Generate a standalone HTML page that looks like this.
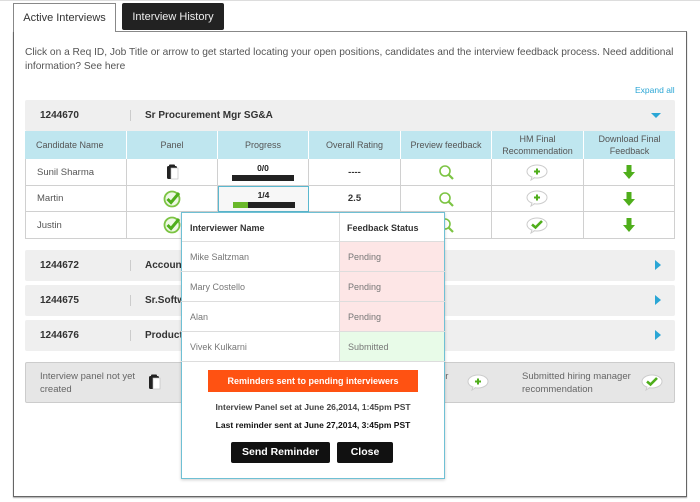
<!DOCTYPE html>
<html><head><style>
*{margin:0;padding:0;box-sizing:border-box}
body{width:700px;height:502px;background:#fff;font-family:"Liberation Sans",sans-serif;position:relative;overflow:hidden;color:#555}
.a{position:absolute}
.tab{position:absolute;font-size:11px;text-align:center;line-height:26px}
.cell{position:absolute;border-right:1px solid #d0d0d0;border-bottom:1px solid #d0d0d0;display:flex;align-items:center;justify-content:center;font-size:9.5px;color:#555}
.hd{background:#bfe6ef;border-right:1px solid #fff;border-bottom:none;text-align:center;line-height:12px;color:#555;font-size:9px}
.sec{position:absolute;left:25px;width:650px;height:31px;background:#efefef;border-radius:2px;font-size:10px;font-weight:bold;color:#333}
.sec .id{position:absolute;left:15px;top:10px}
.sec .sep{position:absolute;left:105px;top:10px;width:1px;height:11px;background:#ccc}
.sec .t{position:absolute;left:120px;top:10px}
.tri{position:absolute;right:14px;top:10px;width:0;height:0;border-top:5px solid transparent;border-bottom:5px solid transparent;border-left:6px solid #2aa6d5}
.pr{position:absolute;left:181px;width:264px;height:30px;border-bottom:1px solid #ddd;font-size:9px;color:#777}
.pr span{position:absolute;left:9px;top:10px}
.pr b{position:absolute;left:158px;top:0;width:105px;height:29px;font-weight:normal;padding:10px 0 0 8px}
</style></head><body>
<div class="a" style="left:0;top:0;width:700px;height:1px;background:#ddd"></div>
<div class="a" style="left:13px;top:31px;width:674px;height:466px;border:1px solid #666;border-top:1px solid #888;box-shadow:0 1px 1px #aaa"></div>
<div class="tab" style="left:13px;top:3px;width:103px;height:29px;border:1px solid #888;border-bottom:none;background:#fff;color:#333;line-height:28px">Active Interviews</div>
<div class="tab" style="left:122px;top:3px;width:102px;height:27px;background:#222;color:#eee;border-radius:2px;line-height:28px">Interview History</div>
<div class="a" style="left:25px;top:46px;font-size:10.2px;line-height:14px;color:#555;width:655px">Click on a Req ID, Job Title or arrow to get started locating your open positions, candidates and the interview feedback process. Need additional information? See here</div>
<div class="a" style="left:635px;top:85px;font-size:8.5px;color:#2aa6d5">Expand all</div>

<div class="sec" style="top:100px;height:31px"><span class="id">1244670</span><span class="sep"></span><span class="t">Sr Procurement Mgr SG&amp;A</span>
<div style="position:absolute;right:14px;top:13px;border-left:5px solid transparent;border-right:5px solid transparent;border-top:5px solid #2aa6d5"></div></div>

<div class="cell hd" style="left:25px;top:131px;width:102px;height:28px;justify-content:flex-start;padding-left:11px">Candidate Name</div>
<div class="cell hd" style="left:127px;top:131px;width:91px;height:28px">Panel</div>
<div class="cell hd" style="left:218px;top:131px;width:91px;height:28px">Progress</div>
<div class="cell hd" style="left:309px;top:131px;width:92px;height:28px">Overall Rating</div>
<div class="cell hd" style="left:401px;top:131px;width:91px;height:28px">Preview feedback</div>
<div class="cell hd" style="left:492px;top:131px;width:92px;height:28px">HM Final<br>Recommendation</div>
<div class="cell hd" style="left:584px;top:131px;width:91px;height:28px;border-right:none">Download Final<br>Feedback</div>

<svg width="0" height="0" style="position:absolute"><defs>
<g id="chk"><circle cx="9" cy="9" r="7.5" fill="#eef8e4" stroke="#7cc443" stroke-width="1.8"/><path d="M4.5 9 L8 12.5 L16 3" fill="none" stroke="#4fae1b" stroke-width="3"/></g>
<g id="mag"><circle cx="7" cy="7" r="5" fill="none" stroke="#7cc443" stroke-width="1.6"/><path d="M10.5 10.5 L15 15" stroke="#7cc443" stroke-width="2.2"/></g>
<g id="bub"><ellipse cx="11" cy="7.5" rx="10" ry="6.5" fill="#fff" stroke="#ccc"/><path d="M6 13 L5 16 L9 13.5" fill="#fff" stroke="#ccc"/><path d="M11 4.5 V10.5 M8 7.5 H14" stroke="#4fae1b" stroke-width="2"/></g>
<g id="bubc"><ellipse cx="11" cy="7.5" rx="10" ry="6.5" fill="#fff" stroke="#ccc"/><path d="M6 13 L5 16 L9 13.5" fill="#fff" stroke="#ccc"/><path d="M6 7.5 L9.5 10.5 L16 4" fill="none" stroke="#4fae1b" stroke-width="2.6"/></g>
<g id="dl"><path d="M3.5 0 H8.5 V7 H12 L6 14 L0 7 H3.5 Z" fill="#4fae1b"/></g>
<g id="clip"><rect x="1" y="2" width="10" height="13" rx="1.5" fill="#222"/><rect x="5" y="4" width="7" height="11" fill="#fff" stroke="#bbb" stroke-width=".6"/><rect x="3" y="0.5" width="6" height="3" rx="1" fill="#222"/></g>
</defs></svg>

<div class="cell" style="left:25px;top:159px;width:102px;height:27px;justify-content:flex-start;padding-left:11px;border-left:1px solid #d0d0d0">Sunil Sharma</div>
<div class="cell" style="left:127px;top:159px;width:91px;height:27px"><svg width="13" height="16"><use href="#clip"/></svg></div>
<div class="cell" style="left:218px;top:159px;width:91px;height:27px;flex-direction:column"><b style="font-size:8.5px;color:#222">0/0</b><div style="width:62px;height:6px;background:#222;margin-top:2px"></div></div>
<div class="cell" style="left:309px;top:159px;width:92px;height:27px;font-weight:bold;color:#333">----</div>
<div class="cell" style="left:401px;top:159px;width:91px;height:27px"><svg width="16" height="16"><use href="#mag"/></svg></div>
<div class="cell" style="left:492px;top:159px;width:92px;height:27px"><svg width="23" height="17"><use href="#bub"/></svg></div>
<div class="cell" style="left:584px;top:159px;width:91px;height:27px;border-right:1px solid #d0d0d0"><svg width="12" height="14"><use href="#dl"/></svg></div>

<div class="cell" style="left:25px;top:186px;width:102px;height:26px;justify-content:flex-start;padding-left:11px;border-left:1px solid #d0d0d0">Martin</div>
<div class="cell" style="left:127px;top:186px;width:91px;height:26px"><svg width="18" height="18"><use href="#chk"/></svg></div>
<div class="cell" style="left:218px;top:186px;width:91px;height:26px;flex-direction:column;border:1px solid #5bb8cf;background:#f7f7f7"><b style="font-size:8.5px;color:#222">1/4</b><div style="width:62px;height:6px;background:#222;margin-top:2px;position:relative"><div style="width:15px;height:6px;background:#6ab82a"></div></div></div>
<div class="cell" style="left:309px;top:186px;width:92px;height:26px;font-weight:bold;color:#333">2.5</div>
<div class="cell" style="left:401px;top:186px;width:91px;height:26px"><svg width="16" height="16"><use href="#mag"/></svg></div>
<div class="cell" style="left:492px;top:186px;width:92px;height:26px"><svg width="23" height="17"><use href="#bub"/></svg></div>
<div class="cell" style="left:584px;top:186px;width:91px;height:26px;border-right:1px solid #d0d0d0"><svg width="12" height="14"><use href="#dl"/></svg></div>

<div class="cell" style="left:25px;top:212px;width:102px;height:27px;justify-content:flex-start;padding-left:11px;border-left:1px solid #d0d0d0">Justin</div>
<div class="cell" style="left:127px;top:212px;width:91px;height:27px"><svg width="18" height="18"><use href="#chk"/></svg></div>
<div class="cell" style="left:218px;top:212px;width:91px;height:27px"></div>
<div class="cell" style="left:309px;top:212px;width:92px;height:27px"></div>
<div class="cell" style="left:401px;top:212px;width:91px;height:27px"><svg width="16" height="16"><use href="#mag"/></svg></div>
<div class="cell" style="left:492px;top:212px;width:92px;height:27px"><svg width="23" height="17"><use href="#bubc"/></svg></div>
<div class="cell" style="left:584px;top:212px;width:91px;height:27px;border-right:1px solid #d0d0d0"><svg width="12" height="14"><use href="#dl"/></svg></div>

<div class="sec" style="top:250px"><span class="id">1244672</span><span class="sep"></span><span class="t">Accounting</span><span class="tri"></span></div>
<div class="sec" style="top:285px"><span class="id">1244675</span><span class="sep"></span><span class="t">Sr.Software</span><span class="tri"></span></div>
<div class="sec" style="top:320px"><span class="id">1244676</span><span class="sep"></span><span class="t">Product</span><span class="tri"></span></div>

<div class="a" style="left:25px;top:362px;width:650px;height:41px;background:#e6e6e6;border:1px solid #ccc;border-radius:2px;font-size:9.5px;color:#666;line-height:13px">
<div class="a" style="left:14px;top:7px">Interview panel not yet<br>created</div>
<svg class="a" style="left:122px;top:11px" width="13" height="16"><use href="#clip"/></svg>
<div class="a" style="left:414px;top:7px">er</div>
<svg class="a" style="left:441px;top:11px" width="23" height="17"><use href="#bub"/></svg>
<div class="a" style="left:496px;top:7px">Submitted hiring manager<br>recommendation</div>
<svg class="a" style="left:615px;top:11px" width="23" height="17"><use href="#bubc"/></svg>
</div>

<div class="a" style="left:181px;top:212px;width:264px;height:267px;background:#fff;border:1px solid #6fc0d4;box-shadow:0 1px 3px rgba(0,0,0,.2)"></div>
<div class="a" style="left:182px;top:213px;width:262px;height:29px;border-bottom:1px solid #ddd;font-size:9px;font-weight:bold;color:#333">
<span class="a" style="left:8px;top:10px">Interviewer Name</span><span class="a" style="left:165px;top:10px">Feedback Status</span>
<span class="a" style="left:157px;top:0;width:1px;height:29px;background:#ddd"></span></div>
<div class="pr" style="top:242px"><span>Mike Saltzman</span><b style="background:#fde6e6;border-left:1px solid #ddd">Pending</b></div>
<div class="pr" style="top:272px"><span>Mary Costello</span><b style="background:#fde6e6;border-left:1px solid #ddd">Pending</b></div>
<div class="pr" style="top:302px"><span>Alan</span><b style="background:#fde6e6;border-left:1px solid #ddd">Pending</b></div>
<div class="pr" style="top:332px"><span>Vivek Kulkarni</span><b style="background:#e8fbe8;border-left:1px solid #ddd">Submitted</b></div>
<div class="a" style="left:208px;top:370px;width:210px;height:22px;background:#ff5212;color:#fff;font-size:9px;font-weight:bold;text-align:center;line-height:22px">Reminders sent to pending interviewers</div>
<div class="a" style="left:181px;top:402px;width:264px;text-align:center;font-size:8.5px;color:#444;font-weight:bold">Interview Panel set at June 26,2014, 1:45pm PST</div>
<div class="a" style="left:181px;top:420px;width:264px;text-align:center;font-size:8.5px;color:#111;font-weight:bold">Last reminder sent at June 27,2014, 3:45pm PST</div>
<div class="a" style="left:231px;top:442px;width:99px;height:21px;background:#111;color:#fff;font-size:10.5px;font-weight:bold;text-align:center;line-height:21px;border-radius:2px">Send Reminder</div>
<div class="a" style="left:337px;top:442px;width:56px;height:21px;background:#111;color:#fff;font-size:10.5px;font-weight:bold;text-align:center;line-height:21px;border-radius:2px">Close</div>
</body></html>
